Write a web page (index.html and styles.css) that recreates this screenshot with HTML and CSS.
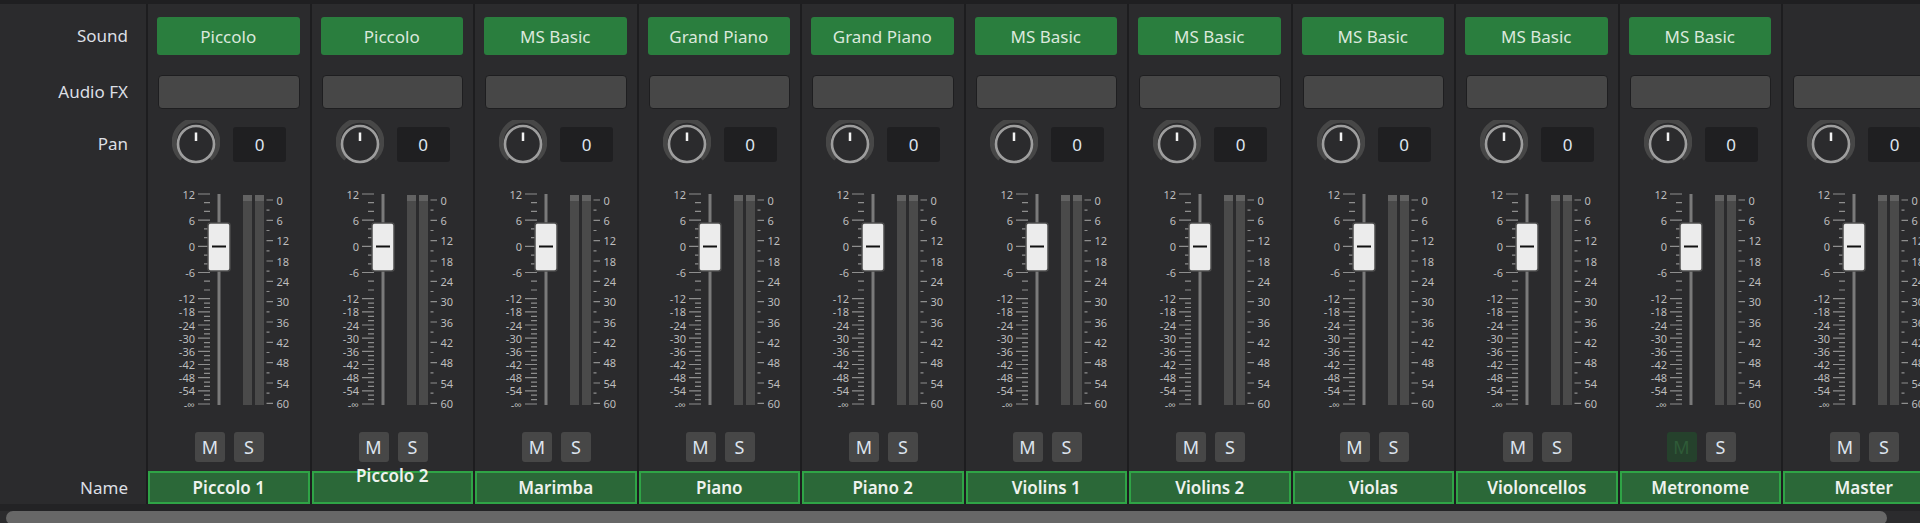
FILE: index.html
```html
<!DOCTYPE html>
<html lang="en">
<head>
<meta charset="utf-8">
<title>Mixer</title>
<link rel="stylesheet" href="styles.css">
</head>
<body>
<div class="topbar"></div>
<div class="mixer">
  <div class="labels">
    <div class="lbl l-sound">Sound</div>
    <div class="lbl l-fx">Audio FX</div>
    <div class="lbl l-pan">Pan</div>
    <div class="l-space"></div>
    <div class="lbl l-name">Name</div>
  </div>
  <div class="strip" id="s1">
    <div class="sound">Piccolo</div>
    <div class="fx"></div>
    <div class="pan">
      <svg class="knob" viewBox="0 0 48 48"><path class="knob-arc" d="M9.9 38.6A21.8 21.8 0 1 1 38.1 38.6"/><circle class="knob-ring" cx="24" cy="24" r="18"/><path class="knob-ptr" d="M24 12.5V21"/></svg>
      <div class="panval">0</div>
    </div>
    <svg class="fader" viewBox="0 0 160 225">
      <path class="ticks" d="M50 9h12M50 35.2h12M50 61.4h12M50 87.5h12M50 113.7h12M50 126.9h12M50 140h12M50 153.2h12M50 166.3h12M50 179.5h12M50 192.7h12M50 205.8h12M50 219h12M56 17.7h6M56 26.4h6M56 43.9h6M56 52.6h6M56 70.1h6M56 78.8h6M56 96.2h6M56 105h6M56 118.1h6M56 122.5h6M56 131.3h6M56 135.6h6M56 144.4h6M56 148.8h6M56 157.6h6M56 161.9h6M56 170.7h6M56 175.1h6M56 183.9h6M56 188.3h6M56 197.1h6M56 201.4h6M56 210.2h6M56 214.6h6M118.5 15h6.5M118.5 35.3h6.5M118.5 55.7h6.5M118.5 76h6.5M118.5 96.3h6.5M118.5 116.7h6.5M118.5 137h6.5M118.5 157.3h6.5M118.5 177.7h6.5M118.5 198h6.5M118.5 218.3h6.5M118.5 25.2h3M118.5 45.5h3M118.5 65.8h3M118.5 86.2h3M118.5 106.5h3M118.5 126.8h3M118.5 147.2h3M118.5 167.5h3M118.5 187.8h3M118.5 208.2h3"/>
      <g class="sl"><text y="9">12</text><text y="35.2">6</text><text y="61.4">0</text><text y="87.5">-6</text><text y="113.7">-12</text><text y="126.9">-18</text><text y="140">-24</text><text y="153.2">-30</text><text y="166.3">-36</text><text y="179.5">-42</text><text y="192.7">-48</text><text y="205.8">-54</text><text y="219">-∞</text></g>
      <g class="sr"><text y="15">0</text><text y="35.3">6</text><text y="55.7">12</text><text y="76">18</text><text y="96.3">24</text><text y="116.7">30</text><text y="137">36</text><text y="157.3">42</text><text y="177.7">48</text><text y="198">54</text><text y="218.3">60</text></g>
      <rect class="track" x="69.5" y="9" width="3" height="211"/>
      <rect class="meter" x="95" y="10" width="9" height="210"/><rect class="meter" x="107" y="10" width="9" height="210"/>
      <rect class="mcap" x="95" y="10" width="9" height="6"/><rect class="mcap" x="107" y="10" width="9" height="6"/>
      <rect class="thumb" x="60" y="38" width="22" height="48" rx="2.5"/>
      <path class="thumb-line" d="M64 61.5h14"/>
    </svg>
    <div class="ms"><span class="msb">M</span><span class="msb">S</span></div>
    <div class="name">Piccolo 1</div>
  </div>
  <div class="strip">
    <div class="sound">Piccolo</div>
    <div class="fx"></div>
    <div class="pan">
      <svg class="knob" viewBox="0 0 48 48"><path class="knob-arc" d="M9.9 38.6A21.8 21.8 0 1 1 38.1 38.6"/><circle class="knob-ring" cx="24" cy="24" r="18"/><path class="knob-ptr" d="M24 12.5V21"/></svg>
      <div class="panval">0</div>
    </div>
    <svg class="fader" viewBox="0 0 160 225">
      <path class="ticks" d="M50 9h12M50 35.2h12M50 61.4h12M50 87.5h12M50 113.7h12M50 126.9h12M50 140h12M50 153.2h12M50 166.3h12M50 179.5h12M50 192.7h12M50 205.8h12M50 219h12M56 17.7h6M56 26.4h6M56 43.9h6M56 52.6h6M56 70.1h6M56 78.8h6M56 96.2h6M56 105h6M56 118.1h6M56 122.5h6M56 131.3h6M56 135.6h6M56 144.4h6M56 148.8h6M56 157.6h6M56 161.9h6M56 170.7h6M56 175.1h6M56 183.9h6M56 188.3h6M56 197.1h6M56 201.4h6M56 210.2h6M56 214.6h6M118.5 15h6.5M118.5 35.3h6.5M118.5 55.7h6.5M118.5 76h6.5M118.5 96.3h6.5M118.5 116.7h6.5M118.5 137h6.5M118.5 157.3h6.5M118.5 177.7h6.5M118.5 198h6.5M118.5 218.3h6.5M118.5 25.2h3M118.5 45.5h3M118.5 65.8h3M118.5 86.2h3M118.5 106.5h3M118.5 126.8h3M118.5 147.2h3M118.5 167.5h3M118.5 187.8h3M118.5 208.2h3"/>
      <g class="sl"><text y="9">12</text><text y="35.2">6</text><text y="61.4">0</text><text y="87.5">-6</text><text y="113.7">-12</text><text y="126.9">-18</text><text y="140">-24</text><text y="153.2">-30</text><text y="166.3">-36</text><text y="179.5">-42</text><text y="192.7">-48</text><text y="205.8">-54</text><text y="219">-∞</text></g>
      <g class="sr"><text y="15">0</text><text y="35.3">6</text><text y="55.7">12</text><text y="76">18</text><text y="96.3">24</text><text y="116.7">30</text><text y="137">36</text><text y="157.3">42</text><text y="177.7">48</text><text y="198">54</text><text y="218.3">60</text></g>
      <rect class="track" x="69.5" y="9" width="3" height="211"/>
      <rect class="meter" x="95" y="10" width="9" height="210"/><rect class="meter" x="107" y="10" width="9" height="210"/>
      <rect class="mcap" x="95" y="10" width="9" height="6"/><rect class="mcap" x="107" y="10" width="9" height="6"/>
      <rect class="thumb" x="60" y="38" width="22" height="48" rx="2.5"/>
      <path class="thumb-line" d="M64 61.5h14"/>
    </svg>
    <div class="ms"><span class="msb">M</span><span class="msb">S</span></div>
    <div class="name raised">Piccolo 2</div>
  </div>
  <div class="strip">
    <div class="sound">MS Basic</div>
    <div class="fx"></div>
    <div class="pan">
      <svg class="knob" viewBox="0 0 48 48"><path class="knob-arc" d="M9.9 38.6A21.8 21.8 0 1 1 38.1 38.6"/><circle class="knob-ring" cx="24" cy="24" r="18"/><path class="knob-ptr" d="M24 12.5V21"/></svg>
      <div class="panval">0</div>
    </div>
    <svg class="fader" viewBox="0 0 160 225">
      <path class="ticks" d="M50 9h12M50 35.2h12M50 61.4h12M50 87.5h12M50 113.7h12M50 126.9h12M50 140h12M50 153.2h12M50 166.3h12M50 179.5h12M50 192.7h12M50 205.8h12M50 219h12M56 17.7h6M56 26.4h6M56 43.9h6M56 52.6h6M56 70.1h6M56 78.8h6M56 96.2h6M56 105h6M56 118.1h6M56 122.5h6M56 131.3h6M56 135.6h6M56 144.4h6M56 148.8h6M56 157.6h6M56 161.9h6M56 170.7h6M56 175.1h6M56 183.9h6M56 188.3h6M56 197.1h6M56 201.4h6M56 210.2h6M56 214.6h6M118.5 15h6.5M118.5 35.3h6.5M118.5 55.7h6.5M118.5 76h6.5M118.5 96.3h6.5M118.5 116.7h6.5M118.5 137h6.5M118.5 157.3h6.5M118.5 177.7h6.5M118.5 198h6.5M118.5 218.3h6.5M118.5 25.2h3M118.5 45.5h3M118.5 65.8h3M118.5 86.2h3M118.5 106.5h3M118.5 126.8h3M118.5 147.2h3M118.5 167.5h3M118.5 187.8h3M118.5 208.2h3"/>
      <g class="sl"><text y="9">12</text><text y="35.2">6</text><text y="61.4">0</text><text y="87.5">-6</text><text y="113.7">-12</text><text y="126.9">-18</text><text y="140">-24</text><text y="153.2">-30</text><text y="166.3">-36</text><text y="179.5">-42</text><text y="192.7">-48</text><text y="205.8">-54</text><text y="219">-∞</text></g>
      <g class="sr"><text y="15">0</text><text y="35.3">6</text><text y="55.7">12</text><text y="76">18</text><text y="96.3">24</text><text y="116.7">30</text><text y="137">36</text><text y="157.3">42</text><text y="177.7">48</text><text y="198">54</text><text y="218.3">60</text></g>
      <rect class="track" x="69.5" y="9" width="3" height="211"/>
      <rect class="meter" x="95" y="10" width="9" height="210"/><rect class="meter" x="107" y="10" width="9" height="210"/>
      <rect class="mcap" x="95" y="10" width="9" height="6"/><rect class="mcap" x="107" y="10" width="9" height="6"/>
      <rect class="thumb" x="60" y="38" width="22" height="48" rx="2.5"/>
      <path class="thumb-line" d="M64 61.5h14"/>
    </svg>
    <div class="ms"><span class="msb">M</span><span class="msb">S</span></div>
    <div class="name">Marimba</div>
  </div>
  <div class="strip">
    <div class="sound">Grand Piano</div>
    <div class="fx"></div>
    <div class="pan">
      <svg class="knob" viewBox="0 0 48 48"><path class="knob-arc" d="M9.9 38.6A21.8 21.8 0 1 1 38.1 38.6"/><circle class="knob-ring" cx="24" cy="24" r="18"/><path class="knob-ptr" d="M24 12.5V21"/></svg>
      <div class="panval">0</div>
    </div>
    <svg class="fader" viewBox="0 0 160 225">
      <path class="ticks" d="M50 9h12M50 35.2h12M50 61.4h12M50 87.5h12M50 113.7h12M50 126.9h12M50 140h12M50 153.2h12M50 166.3h12M50 179.5h12M50 192.7h12M50 205.8h12M50 219h12M56 17.7h6M56 26.4h6M56 43.9h6M56 52.6h6M56 70.1h6M56 78.8h6M56 96.2h6M56 105h6M56 118.1h6M56 122.5h6M56 131.3h6M56 135.6h6M56 144.4h6M56 148.8h6M56 157.6h6M56 161.9h6M56 170.7h6M56 175.1h6M56 183.9h6M56 188.3h6M56 197.1h6M56 201.4h6M56 210.2h6M56 214.6h6M118.5 15h6.5M118.5 35.3h6.5M118.5 55.7h6.5M118.5 76h6.5M118.5 96.3h6.5M118.5 116.7h6.5M118.5 137h6.5M118.5 157.3h6.5M118.5 177.7h6.5M118.5 198h6.5M118.5 218.3h6.5M118.5 25.2h3M118.5 45.5h3M118.5 65.8h3M118.5 86.2h3M118.5 106.5h3M118.5 126.8h3M118.5 147.2h3M118.5 167.5h3M118.5 187.8h3M118.5 208.2h3"/>
      <g class="sl"><text y="9">12</text><text y="35.2">6</text><text y="61.4">0</text><text y="87.5">-6</text><text y="113.7">-12</text><text y="126.9">-18</text><text y="140">-24</text><text y="153.2">-30</text><text y="166.3">-36</text><text y="179.5">-42</text><text y="192.7">-48</text><text y="205.8">-54</text><text y="219">-∞</text></g>
      <g class="sr"><text y="15">0</text><text y="35.3">6</text><text y="55.7">12</text><text y="76">18</text><text y="96.3">24</text><text y="116.7">30</text><text y="137">36</text><text y="157.3">42</text><text y="177.7">48</text><text y="198">54</text><text y="218.3">60</text></g>
      <rect class="track" x="69.5" y="9" width="3" height="211"/>
      <rect class="meter" x="95" y="10" width="9" height="210"/><rect class="meter" x="107" y="10" width="9" height="210"/>
      <rect class="mcap" x="95" y="10" width="9" height="6"/><rect class="mcap" x="107" y="10" width="9" height="6"/>
      <rect class="thumb" x="60" y="38" width="22" height="48" rx="2.5"/>
      <path class="thumb-line" d="M64 61.5h14"/>
    </svg>
    <div class="ms"><span class="msb">M</span><span class="msb">S</span></div>
    <div class="name">Piano</div>
  </div>
  <div class="strip">
    <div class="sound">Grand Piano</div>
    <div class="fx"></div>
    <div class="pan">
      <svg class="knob" viewBox="0 0 48 48"><path class="knob-arc" d="M9.9 38.6A21.8 21.8 0 1 1 38.1 38.6"/><circle class="knob-ring" cx="24" cy="24" r="18"/><path class="knob-ptr" d="M24 12.5V21"/></svg>
      <div class="panval">0</div>
    </div>
    <svg class="fader" viewBox="0 0 160 225">
      <path class="ticks" d="M50 9h12M50 35.2h12M50 61.4h12M50 87.5h12M50 113.7h12M50 126.9h12M50 140h12M50 153.2h12M50 166.3h12M50 179.5h12M50 192.7h12M50 205.8h12M50 219h12M56 17.7h6M56 26.4h6M56 43.9h6M56 52.6h6M56 70.1h6M56 78.8h6M56 96.2h6M56 105h6M56 118.1h6M56 122.5h6M56 131.3h6M56 135.6h6M56 144.4h6M56 148.8h6M56 157.6h6M56 161.9h6M56 170.7h6M56 175.1h6M56 183.9h6M56 188.3h6M56 197.1h6M56 201.4h6M56 210.2h6M56 214.6h6M118.5 15h6.5M118.5 35.3h6.5M118.5 55.7h6.5M118.5 76h6.5M118.5 96.3h6.5M118.5 116.7h6.5M118.5 137h6.5M118.5 157.3h6.5M118.5 177.7h6.5M118.5 198h6.5M118.5 218.3h6.5M118.5 25.2h3M118.5 45.5h3M118.5 65.8h3M118.5 86.2h3M118.5 106.5h3M118.5 126.8h3M118.5 147.2h3M118.5 167.5h3M118.5 187.8h3M118.5 208.2h3"/>
      <g class="sl"><text y="9">12</text><text y="35.2">6</text><text y="61.4">0</text><text y="87.5">-6</text><text y="113.7">-12</text><text y="126.9">-18</text><text y="140">-24</text><text y="153.2">-30</text><text y="166.3">-36</text><text y="179.5">-42</text><text y="192.7">-48</text><text y="205.8">-54</text><text y="219">-∞</text></g>
      <g class="sr"><text y="15">0</text><text y="35.3">6</text><text y="55.7">12</text><text y="76">18</text><text y="96.3">24</text><text y="116.7">30</text><text y="137">36</text><text y="157.3">42</text><text y="177.7">48</text><text y="198">54</text><text y="218.3">60</text></g>
      <rect class="track" x="69.5" y="9" width="3" height="211"/>
      <rect class="meter" x="95" y="10" width="9" height="210"/><rect class="meter" x="107" y="10" width="9" height="210"/>
      <rect class="mcap" x="95" y="10" width="9" height="6"/><rect class="mcap" x="107" y="10" width="9" height="6"/>
      <rect class="thumb" x="60" y="38" width="22" height="48" rx="2.5"/>
      <path class="thumb-line" d="M64 61.5h14"/>
    </svg>
    <div class="ms"><span class="msb">M</span><span class="msb">S</span></div>
    <div class="name">Piano 2</div>
  </div>
  <div class="strip">
    <div class="sound">MS Basic</div>
    <div class="fx"></div>
    <div class="pan">
      <svg class="knob" viewBox="0 0 48 48"><path class="knob-arc" d="M9.9 38.6A21.8 21.8 0 1 1 38.1 38.6"/><circle class="knob-ring" cx="24" cy="24" r="18"/><path class="knob-ptr" d="M24 12.5V21"/></svg>
      <div class="panval">0</div>
    </div>
    <svg class="fader" viewBox="0 0 160 225">
      <path class="ticks" d="M50 9h12M50 35.2h12M50 61.4h12M50 87.5h12M50 113.7h12M50 126.9h12M50 140h12M50 153.2h12M50 166.3h12M50 179.5h12M50 192.7h12M50 205.8h12M50 219h12M56 17.7h6M56 26.4h6M56 43.9h6M56 52.6h6M56 70.1h6M56 78.8h6M56 96.2h6M56 105h6M56 118.1h6M56 122.5h6M56 131.3h6M56 135.6h6M56 144.4h6M56 148.8h6M56 157.6h6M56 161.9h6M56 170.7h6M56 175.1h6M56 183.9h6M56 188.3h6M56 197.1h6M56 201.4h6M56 210.2h6M56 214.6h6M118.5 15h6.5M118.5 35.3h6.5M118.5 55.7h6.5M118.5 76h6.5M118.5 96.3h6.5M118.5 116.7h6.5M118.5 137h6.5M118.5 157.3h6.5M118.5 177.7h6.5M118.5 198h6.5M118.5 218.3h6.5M118.5 25.2h3M118.5 45.5h3M118.5 65.8h3M118.5 86.2h3M118.5 106.5h3M118.5 126.8h3M118.5 147.2h3M118.5 167.5h3M118.5 187.8h3M118.5 208.2h3"/>
      <g class="sl"><text y="9">12</text><text y="35.2">6</text><text y="61.4">0</text><text y="87.5">-6</text><text y="113.7">-12</text><text y="126.9">-18</text><text y="140">-24</text><text y="153.2">-30</text><text y="166.3">-36</text><text y="179.5">-42</text><text y="192.7">-48</text><text y="205.8">-54</text><text y="219">-∞</text></g>
      <g class="sr"><text y="15">0</text><text y="35.3">6</text><text y="55.7">12</text><text y="76">18</text><text y="96.3">24</text><text y="116.7">30</text><text y="137">36</text><text y="157.3">42</text><text y="177.7">48</text><text y="198">54</text><text y="218.3">60</text></g>
      <rect class="track" x="69.5" y="9" width="3" height="211"/>
      <rect class="meter" x="95" y="10" width="9" height="210"/><rect class="meter" x="107" y="10" width="9" height="210"/>
      <rect class="mcap" x="95" y="10" width="9" height="6"/><rect class="mcap" x="107" y="10" width="9" height="6"/>
      <rect class="thumb" x="60" y="38" width="22" height="48" rx="2.5"/>
      <path class="thumb-line" d="M64 61.5h14"/>
    </svg>
    <div class="ms"><span class="msb">M</span><span class="msb">S</span></div>
    <div class="name">Violins 1</div>
  </div>
  <div class="strip">
    <div class="sound">MS Basic</div>
    <div class="fx"></div>
    <div class="pan">
      <svg class="knob" viewBox="0 0 48 48"><path class="knob-arc" d="M9.9 38.6A21.8 21.8 0 1 1 38.1 38.6"/><circle class="knob-ring" cx="24" cy="24" r="18"/><path class="knob-ptr" d="M24 12.5V21"/></svg>
      <div class="panval">0</div>
    </div>
    <svg class="fader" viewBox="0 0 160 225">
      <path class="ticks" d="M50 9h12M50 35.2h12M50 61.4h12M50 87.5h12M50 113.7h12M50 126.9h12M50 140h12M50 153.2h12M50 166.3h12M50 179.5h12M50 192.7h12M50 205.8h12M50 219h12M56 17.7h6M56 26.4h6M56 43.9h6M56 52.6h6M56 70.1h6M56 78.8h6M56 96.2h6M56 105h6M56 118.1h6M56 122.5h6M56 131.3h6M56 135.6h6M56 144.4h6M56 148.8h6M56 157.6h6M56 161.9h6M56 170.7h6M56 175.1h6M56 183.9h6M56 188.3h6M56 197.1h6M56 201.4h6M56 210.2h6M56 214.6h6M118.5 15h6.5M118.5 35.3h6.5M118.5 55.7h6.5M118.5 76h6.5M118.5 96.3h6.5M118.5 116.7h6.5M118.5 137h6.5M118.5 157.3h6.5M118.5 177.7h6.5M118.5 198h6.5M118.5 218.3h6.5M118.5 25.2h3M118.5 45.5h3M118.5 65.8h3M118.5 86.2h3M118.5 106.5h3M118.5 126.8h3M118.5 147.2h3M118.5 167.5h3M118.5 187.8h3M118.5 208.2h3"/>
      <g class="sl"><text y="9">12</text><text y="35.2">6</text><text y="61.4">0</text><text y="87.5">-6</text><text y="113.7">-12</text><text y="126.9">-18</text><text y="140">-24</text><text y="153.2">-30</text><text y="166.3">-36</text><text y="179.5">-42</text><text y="192.7">-48</text><text y="205.8">-54</text><text y="219">-∞</text></g>
      <g class="sr"><text y="15">0</text><text y="35.3">6</text><text y="55.7">12</text><text y="76">18</text><text y="96.3">24</text><text y="116.7">30</text><text y="137">36</text><text y="157.3">42</text><text y="177.7">48</text><text y="198">54</text><text y="218.3">60</text></g>
      <rect class="track" x="69.5" y="9" width="3" height="211"/>
      <rect class="meter" x="95" y="10" width="9" height="210"/><rect class="meter" x="107" y="10" width="9" height="210"/>
      <rect class="mcap" x="95" y="10" width="9" height="6"/><rect class="mcap" x="107" y="10" width="9" height="6"/>
      <rect class="thumb" x="60" y="38" width="22" height="48" rx="2.5"/>
      <path class="thumb-line" d="M64 61.5h14"/>
    </svg>
    <div class="ms"><span class="msb">M</span><span class="msb">S</span></div>
    <div class="name">Violins 2</div>
  </div>
  <div class="strip">
    <div class="sound">MS Basic</div>
    <div class="fx"></div>
    <div class="pan">
      <svg class="knob" viewBox="0 0 48 48"><path class="knob-arc" d="M9.9 38.6A21.8 21.8 0 1 1 38.1 38.6"/><circle class="knob-ring" cx="24" cy="24" r="18"/><path class="knob-ptr" d="M24 12.5V21"/></svg>
      <div class="panval">0</div>
    </div>
    <svg class="fader" viewBox="0 0 160 225">
      <path class="ticks" d="M50 9h12M50 35.2h12M50 61.4h12M50 87.5h12M50 113.7h12M50 126.9h12M50 140h12M50 153.2h12M50 166.3h12M50 179.5h12M50 192.7h12M50 205.8h12M50 219h12M56 17.7h6M56 26.4h6M56 43.9h6M56 52.6h6M56 70.1h6M56 78.8h6M56 96.2h6M56 105h6M56 118.1h6M56 122.5h6M56 131.3h6M56 135.6h6M56 144.4h6M56 148.8h6M56 157.6h6M56 161.9h6M56 170.7h6M56 175.1h6M56 183.9h6M56 188.3h6M56 197.1h6M56 201.4h6M56 210.2h6M56 214.6h6M118.5 15h6.5M118.5 35.3h6.5M118.5 55.7h6.5M118.5 76h6.5M118.5 96.3h6.5M118.5 116.7h6.5M118.5 137h6.5M118.5 157.3h6.5M118.5 177.7h6.5M118.5 198h6.5M118.5 218.3h6.5M118.5 25.2h3M118.5 45.5h3M118.5 65.8h3M118.5 86.2h3M118.5 106.5h3M118.5 126.8h3M118.5 147.2h3M118.5 167.5h3M118.5 187.8h3M118.5 208.2h3"/>
      <g class="sl"><text y="9">12</text><text y="35.2">6</text><text y="61.4">0</text><text y="87.5">-6</text><text y="113.7">-12</text><text y="126.9">-18</text><text y="140">-24</text><text y="153.2">-30</text><text y="166.3">-36</text><text y="179.5">-42</text><text y="192.7">-48</text><text y="205.8">-54</text><text y="219">-∞</text></g>
      <g class="sr"><text y="15">0</text><text y="35.3">6</text><text y="55.7">12</text><text y="76">18</text><text y="96.3">24</text><text y="116.7">30</text><text y="137">36</text><text y="157.3">42</text><text y="177.7">48</text><text y="198">54</text><text y="218.3">60</text></g>
      <rect class="track" x="69.5" y="9" width="3" height="211"/>
      <rect class="meter" x="95" y="10" width="9" height="210"/><rect class="meter" x="107" y="10" width="9" height="210"/>
      <rect class="mcap" x="95" y="10" width="9" height="6"/><rect class="mcap" x="107" y="10" width="9" height="6"/>
      <rect class="thumb" x="60" y="38" width="22" height="48" rx="2.5"/>
      <path class="thumb-line" d="M64 61.5h14"/>
    </svg>
    <div class="ms"><span class="msb">M</span><span class="msb">S</span></div>
    <div class="name">Violas</div>
  </div>
  <div class="strip">
    <div class="sound">MS Basic</div>
    <div class="fx"></div>
    <div class="pan">
      <svg class="knob" viewBox="0 0 48 48"><path class="knob-arc" d="M9.9 38.6A21.8 21.8 0 1 1 38.1 38.6"/><circle class="knob-ring" cx="24" cy="24" r="18"/><path class="knob-ptr" d="M24 12.5V21"/></svg>
      <div class="panval">0</div>
    </div>
    <svg class="fader" viewBox="0 0 160 225">
      <path class="ticks" d="M50 9h12M50 35.2h12M50 61.4h12M50 87.5h12M50 113.7h12M50 126.9h12M50 140h12M50 153.2h12M50 166.3h12M50 179.5h12M50 192.7h12M50 205.8h12M50 219h12M56 17.7h6M56 26.4h6M56 43.9h6M56 52.6h6M56 70.1h6M56 78.8h6M56 96.2h6M56 105h6M56 118.1h6M56 122.5h6M56 131.3h6M56 135.6h6M56 144.4h6M56 148.8h6M56 157.6h6M56 161.9h6M56 170.7h6M56 175.1h6M56 183.9h6M56 188.3h6M56 197.1h6M56 201.4h6M56 210.2h6M56 214.6h6M118.5 15h6.5M118.5 35.3h6.5M118.5 55.7h6.5M118.5 76h6.5M118.5 96.3h6.5M118.5 116.7h6.5M118.5 137h6.5M118.5 157.3h6.5M118.5 177.7h6.5M118.5 198h6.5M118.5 218.3h6.5M118.5 25.2h3M118.5 45.5h3M118.5 65.8h3M118.5 86.2h3M118.5 106.5h3M118.5 126.8h3M118.5 147.2h3M118.5 167.5h3M118.5 187.8h3M118.5 208.2h3"/>
      <g class="sl"><text y="9">12</text><text y="35.2">6</text><text y="61.4">0</text><text y="87.5">-6</text><text y="113.7">-12</text><text y="126.9">-18</text><text y="140">-24</text><text y="153.2">-30</text><text y="166.3">-36</text><text y="179.5">-42</text><text y="192.7">-48</text><text y="205.8">-54</text><text y="219">-∞</text></g>
      <g class="sr"><text y="15">0</text><text y="35.3">6</text><text y="55.7">12</text><text y="76">18</text><text y="96.3">24</text><text y="116.7">30</text><text y="137">36</text><text y="157.3">42</text><text y="177.7">48</text><text y="198">54</text><text y="218.3">60</text></g>
      <rect class="track" x="69.5" y="9" width="3" height="211"/>
      <rect class="meter" x="95" y="10" width="9" height="210"/><rect class="meter" x="107" y="10" width="9" height="210"/>
      <rect class="mcap" x="95" y="10" width="9" height="6"/><rect class="mcap" x="107" y="10" width="9" height="6"/>
      <rect class="thumb" x="60" y="38" width="22" height="48" rx="2.5"/>
      <path class="thumb-line" d="M64 61.5h14"/>
    </svg>
    <div class="ms"><span class="msb">M</span><span class="msb">S</span></div>
    <div class="name">Violoncellos</div>
  </div>
  <div class="strip">
    <div class="sound">MS Basic</div>
    <div class="fx"></div>
    <div class="pan">
      <svg class="knob" viewBox="0 0 48 48"><path class="knob-arc" d="M9.9 38.6A21.8 21.8 0 1 1 38.1 38.6"/><circle class="knob-ring" cx="24" cy="24" r="18"/><path class="knob-ptr" d="M24 12.5V21"/></svg>
      <div class="panval">0</div>
    </div>
    <svg class="fader" viewBox="0 0 160 225">
      <path class="ticks" d="M50 9h12M50 35.2h12M50 61.4h12M50 87.5h12M50 113.7h12M50 126.9h12M50 140h12M50 153.2h12M50 166.3h12M50 179.5h12M50 192.7h12M50 205.8h12M50 219h12M56 17.7h6M56 26.4h6M56 43.9h6M56 52.6h6M56 70.1h6M56 78.8h6M56 96.2h6M56 105h6M56 118.1h6M56 122.5h6M56 131.3h6M56 135.6h6M56 144.4h6M56 148.8h6M56 157.6h6M56 161.9h6M56 170.7h6M56 175.1h6M56 183.9h6M56 188.3h6M56 197.1h6M56 201.4h6M56 210.2h6M56 214.6h6M118.5 15h6.5M118.5 35.3h6.5M118.5 55.7h6.5M118.5 76h6.5M118.5 96.3h6.5M118.5 116.7h6.5M118.5 137h6.5M118.5 157.3h6.5M118.5 177.7h6.5M118.5 198h6.5M118.5 218.3h6.5M118.5 25.2h3M118.5 45.5h3M118.5 65.8h3M118.5 86.2h3M118.5 106.5h3M118.5 126.8h3M118.5 147.2h3M118.5 167.5h3M118.5 187.8h3M118.5 208.2h3"/>
      <g class="sl"><text y="9">12</text><text y="35.2">6</text><text y="61.4">0</text><text y="87.5">-6</text><text y="113.7">-12</text><text y="126.9">-18</text><text y="140">-24</text><text y="153.2">-30</text><text y="166.3">-36</text><text y="179.5">-42</text><text y="192.7">-48</text><text y="205.8">-54</text><text y="219">-∞</text></g>
      <g class="sr"><text y="15">0</text><text y="35.3">6</text><text y="55.7">12</text><text y="76">18</text><text y="96.3">24</text><text y="116.7">30</text><text y="137">36</text><text y="157.3">42</text><text y="177.7">48</text><text y="198">54</text><text y="218.3">60</text></g>
      <rect class="track" x="69.5" y="9" width="3" height="211"/>
      <rect class="meter" x="95" y="10" width="9" height="210"/><rect class="meter" x="107" y="10" width="9" height="210"/>
      <rect class="mcap" x="95" y="10" width="9" height="6"/><rect class="mcap" x="107" y="10" width="9" height="6"/>
      <rect class="thumb" x="60" y="38" width="22" height="48" rx="2.5"/>
      <path class="thumb-line" d="M64 61.5h14"/>
    </svg>
    <div class="ms"><span class="msb muted">M</span><span class="msb">S</span></div>
    <div class="name">Metronome</div>
  </div>
  <div class="strip">
    <div class="sound empty"></div>
    <div class="fx"></div>
    <div class="pan">
      <svg class="knob" viewBox="0 0 48 48"><path class="knob-arc" d="M9.9 38.6A21.8 21.8 0 1 1 38.1 38.6"/><circle class="knob-ring" cx="24" cy="24" r="18"/><path class="knob-ptr" d="M24 12.5V21"/></svg>
      <div class="panval">0</div>
    </div>
    <svg class="fader" viewBox="0 0 160 225">
      <path class="ticks" d="M50 9h12M50 35.2h12M50 61.4h12M50 87.5h12M50 113.7h12M50 126.9h12M50 140h12M50 153.2h12M50 166.3h12M50 179.5h12M50 192.7h12M50 205.8h12M50 219h12M56 17.7h6M56 26.4h6M56 43.9h6M56 52.6h6M56 70.1h6M56 78.8h6M56 96.2h6M56 105h6M56 118.1h6M56 122.5h6M56 131.3h6M56 135.6h6M56 144.4h6M56 148.8h6M56 157.6h6M56 161.9h6M56 170.7h6M56 175.1h6M56 183.9h6M56 188.3h6M56 197.1h6M56 201.4h6M56 210.2h6M56 214.6h6M118.5 15h6.5M118.5 35.3h6.5M118.5 55.7h6.5M118.5 76h6.5M118.5 96.3h6.5M118.5 116.7h6.5M118.5 137h6.5M118.5 157.3h6.5M118.5 177.7h6.5M118.5 198h6.5M118.5 218.3h6.5M118.5 25.2h3M118.5 45.5h3M118.5 65.8h3M118.5 86.2h3M118.5 106.5h3M118.5 126.8h3M118.5 147.2h3M118.5 167.5h3M118.5 187.8h3M118.5 208.2h3"/>
      <g class="sl"><text y="9">12</text><text y="35.2">6</text><text y="61.4">0</text><text y="87.5">-6</text><text y="113.7">-12</text><text y="126.9">-18</text><text y="140">-24</text><text y="153.2">-30</text><text y="166.3">-36</text><text y="179.5">-42</text><text y="192.7">-48</text><text y="205.8">-54</text><text y="219">-∞</text></g>
      <g class="sr"><text y="15">0</text><text y="35.3">6</text><text y="55.7">12</text><text y="76">18</text><text y="96.3">24</text><text y="116.7">30</text><text y="137">36</text><text y="157.3">42</text><text y="177.7">48</text><text y="198">54</text><text y="218.3">60</text></g>
      <rect class="track" x="69.5" y="9" width="3" height="211"/>
      <rect class="meter" x="95" y="10" width="9" height="210"/><rect class="meter" x="107" y="10" width="9" height="210"/>
      <rect class="mcap" x="95" y="10" width="9" height="6"/><rect class="mcap" x="107" y="10" width="9" height="6"/>
      <rect class="thumb" x="60" y="38" width="22" height="48" rx="2.5"/>
      <path class="thumb-line" d="M64 61.5h14"/>
    </svg>
    <div class="ms"><span class="msb">M</span><span class="msb">S</span></div>
    <div class="name">Master</div>
  </div>
</div>
<div class="hscroll"><div class="hthumb"></div></div>
</body>
</html>
```

FILE: styles.css
```css
html, body {
  margin: 0;
  padding: 0;
}
body {
  width: 1920px;
  height: 523px;
  overflow: hidden;
  background: #2b2b2d;
  color: #dfe3e8;
  font-family: "Noto Sans", "Open Sans", sans-serif;
  font-size: 17px;
}
.topbar {
  height: 4px;
  background: #1f1f21;
}
.mixer {
  display: flex;
  height: 500px;
}
.labels {
  flex: 0 0 146px;
  display: flex;
  flex-direction: column;
  align-items: flex-end;
  padding-right: 18px;
  box-sizing: border-box;
}
.lbl {
  display: flex;
  align-items: center;
  color: #dcdfe4;
}
.l-sound { margin-top: 13px; height: 38px; }
.l-fx { margin-top: 20px; height: 34px; }
.l-pan { margin-top: 11px; height: 48px; }
.l-space { height: 303px; }
.l-name { height: 33px; padding-top: 1px; }

.strip {
  flex: 0 0 163.5px;
  width: 163.5px;
  box-sizing: border-box;
  border-left: 2px solid #1d1d1f;
  display: flex;
  flex-direction: column;
}
.sound {
  margin: 13px 10px 0 9px;
  height: 38px;
  border-radius: 3px;
  background: #2a7e3e;
  color: #dbe8dc;
  display: flex;
  align-items: center;
  justify-content: center;
}
.sound.empty {
  background: transparent;
}
.fx {
  margin: 20px 10px 0 10px;
  height: 34px;
  box-sizing: border-box;
  border: 1px solid #1e1e20;
  border-radius: 4px;
  background: #474747;
}
.pan {
  margin-top: 11px;
  height: 48px;
  display: flex;
  align-items: center;
  padding-left: 24px;
}
.knob {
  width: 48px;
  height: 48px;
  display: block;
}
.knob-arc {
  fill: none;
  stroke: #474747;
  stroke-width: 5;
}
.knob-ring {
  fill: none;
  stroke: #9e9e9e;
  stroke-width: 2.6;
}
.knob-ptr {
  stroke: #f2f2f2;
  stroke-width: 2.5;
}
.panval {
  margin-left: 13px;
  width: 53px;
  height: 35px;
  border-radius: 3px;
  background: #1f1f21;
  color: #dfe6f0;
  display: flex;
  align-items: center;
  justify-content: center;
}
.fader {
  margin-top: 17px;
  width: 160px;
  height: 225px;
  display: block;
  overflow: visible;
}
.ticks {
  fill: none;
  stroke: #8e8e8e;
  stroke-width: 1.2;
}
.sl text, .sr text {
  font-family: "Noto Sans", "Open Sans", sans-serif;
  font-size: 11px;
  fill: #bdbdbd;
  dominant-baseline: central;
}
.sl text {
  text-anchor: end;
  transform: translateX(47px);
}
.sr text {
  transform: translateX(128.5px);
}
.track { fill: #7a7a7a; }
.meter { fill: #4a4a4a; }
.mcap { fill: #626262; }
.thumb {
  fill: #ececec;
  stroke: #4c4c4c;
  stroke-width: 1.5;
}
.thumb-line {
  stroke: #111;
  stroke-width: 2;
}
.ms {
  margin-top: 22px;
  height: 30px;
  display: flex;
  gap: 9px;
  padding-left: 47px;
}
.msb {
  width: 30px;
  height: 30px;
  border-radius: 3px;
  background: #474747;
  color: #dde4ee;
  font-size: 18px;
  display: flex;
  align-items: center;
  justify-content: center;
}
.msb.muted {
  background: #25412c;
  color: #2f5b38;
}
.name {
  margin-top: 9px;
  height: 33px;
  box-sizing: border-box;
  border: 2px solid #2fa446;
  background: #2b6838;
  color: #eef2ee;
  font-weight: 600;
  display: flex;
  align-items: center;
  justify-content: center;
  white-space: nowrap;
}
.name.raised {
  align-items: flex-start;
  line-height: 6px;
  overflow: visible;
}
.hscroll {
  height: 19px;
  background: #2b2b2d;
  border-top: 7px solid #232325;
  box-sizing: border-box;
}
.hthumb {
  margin-left: 6px;
  width: 1881px;
  height: 14px;
  border-radius: 7px;
  background: #676767;
}
```
